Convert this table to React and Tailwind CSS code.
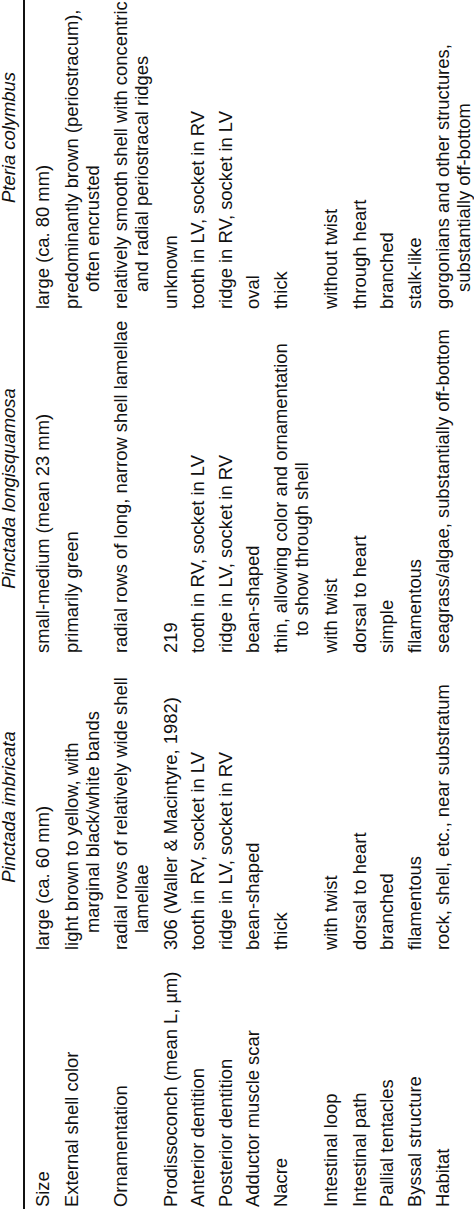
import React from "react";

const cols = "grid grid-cols-[259px_297px_344px_343px]";

const rows = [
  { label: "Size", h: "h-[28.5px]", cells: [["large (ca. 60 mm)"], ["small-medium (mean 23 mm)"], ["large (ca. 80 mm)"]] },
  {
    label: "External shell color",
    h: "h-[49.5px]",
    cells: [
      ["light brown to yellow, with", "marginal black/white bands"],
      ["primarily green"],
      ["predominantly brown (periostracum),", "often encrusted"],
    ],
  },
  {
    label: "Ornamentation",
    h: "h-[50px]",
    cells: [
      ["radial rows of relatively wide shell", "lamellae"],
      ["radial rows of long, narrow shell lamellae"],
      ["relatively smooth shell with concentric", "and radial periostracal ridges"],
    ],
  },
  { label: "Prodissoconch (mean L, µm)", h: "h-[27px]", cells: [["306 (Waller & Macintyre, 1982)"], ["219"], ["unknown"]] },
  { label: "Anterior dentition", h: "h-[28px]", cells: [["tooth in RV, socket in LV"], ["tooth in RV, socket in LV"], ["tooth in LV, socket in RV"]] },
  { label: "Posterior dentition", h: "h-[27px]", cells: [["ridge in LV, socket in RV"], ["ridge in LV, socket in RV"], ["ridge in RV, socket in LV"]] },
  { label: "Adductor muscle scar", h: "h-[28px]", cells: [["bean-shaped"], ["bean-shaped"], ["oval"]] },
  {
    label: "Nacre",
    h: "h-[50px]",
    cells: [["thick"], ["thin, allowing color and ornamentation", "to show through shell"], ["thick"]],
  },
  { label: "Intestinal loop", h: "h-[28.5px]", cells: [["with twist"], ["with twist"], ["without twist"]] },
  { label: "Intestinal path", h: "h-[27.5px]", cells: [["dorsal to heart"], ["dorsal to heart"], ["through heart"]] },
  { label: "Pallial tentacles", h: "h-[27.5px]", cells: [["branched"], ["simple"], ["branched"]] },
  { label: "Byssal structure", h: "h-[28.5px]", cells: [["filamentous"], ["filamentous"], ["stalk-like"]] },
  {
    label: "Habitat",
    h: "h-[42px]",
    cells: [
      ["rock, shell, etc., near substratum"],
      ["seagrass/algae, substantially off-bottom"],
      ["gorgonians and other structures,", "substantially off-bottom"],
    ],
  },
];

const Cell = ({ lines }) => (
  <div className="whitespace-nowrap">
    {lines.map((l, i) => (
      <div key={i} className={i ? "pl-[17px]" : ""}>
        {l}
      </div>
    ))}
  </div>
);

const App = () => {
  return (
    <div className="w-[474px] h-[1209px] overflow-hidden bg-white">
      <div className="flex flex-col w-[1243px] h-[474px] origin-top-left -rotate-90 translate-y-[1209px] font-['Liberation_Sans',Arial,sans-serif] text-[18.4px] leading-[21px] text-[#111]">
        {/* header row */}
        <div className={`${cols} h-[24px] leading-[17px] italic`}>
          <div></div>
          <div className="pr-[11px] text-center">Pinctada imbricata</div>
          <div className="pr-[15px] text-center">Pinctada longisquamosa</div>
          <div className="text-center">Pteria colymbus</div>
        </div>
        <div className="h-[1.5px] bg-[#111]"></div>
        <div className="mt-[7.5px] flex flex-col">
          {rows.map((r) => (
            <div key={r.label} className={`${cols} ${r.h}`}>
              <div className="pl-[2px] whitespace-nowrap">{r.label}</div>
              <Cell lines={r.cells[0]} />
              <Cell lines={r.cells[1]} />
              <Cell lines={r.cells[2]} />
            </div>
          ))}
        </div>
      </div>
    </div>
  );
};

export default App;
